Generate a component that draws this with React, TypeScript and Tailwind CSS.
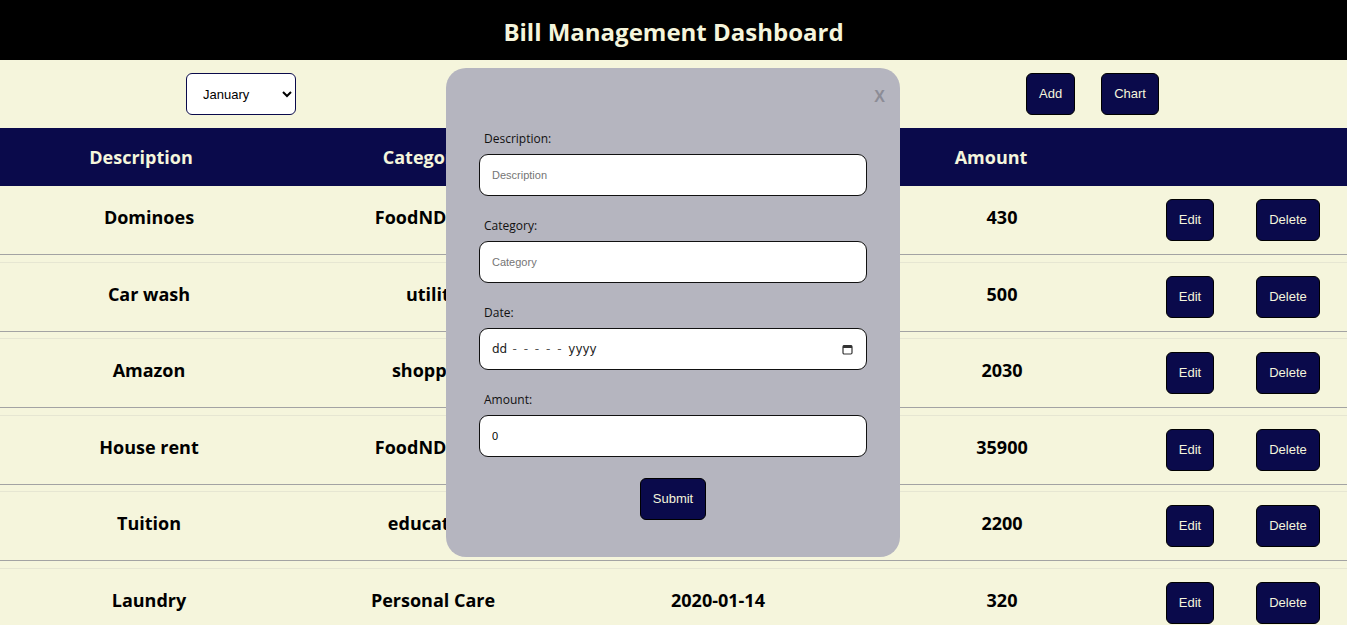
import React from 'react';

const bills = [
  { description: 'Dominoes', category: 'FoodNDining', date: '2020-01-02', amount: 430 },
  { description: 'Car wash', category: 'utility', date: '2020-01-04', amount: 500 },
  { description: 'Amazon', category: 'shopping', date: '2020-01-06', amount: 2030 },
  { description: 'House rent', category: 'FoodNDining', date: '2020-01-08', amount: 35900 },
  { description: 'Tuition', category: 'education', date: '2020-01-10', amount: 2200 },
  { description: 'Laundry', category: 'Personal Care', date: '2020-01-14', amount: 320 },
];

const btn =
  "h-[42px] px-3 rounded-[6px] border border-black bg-[#0a0a4b] text-[#f5f5dc] text-[13px] font-normal font-['Liberation_Sans',Arial,sans-serif]";

function Field({ label, children }: { label: string; children: React.ReactNode }) {
  return (
    <div className="mb-[22px]">
      <label className="block ml-[5px] mb-[7px] text-[12px] leading-[16px] text-[#111]">{label}</label>
      {children}
    </div>
  );
}

const inputCls =
  "w-full h-[42px] rounded-[9px] border border-[#111] bg-white px-3 text-[11px] text-black placeholder:text-[#757575] outline-none font-['Liberation_Sans',Arial,sans-serif]";

export default function App() {
  return (
    <div className="relative min-h-screen bg-[#f5f5dc] font-['Open_Sans',sans-serif]">
      {/* Header */}
      <header className="h-[60px] bg-black flex items-center justify-center pt-[3px]">
        <h1 className="text-[24px] font-bold text-[#f5f5dc]">Bill Management Dashboard</h1>
      </header>

      {/* Toolbar */}
      <div className="h-[68px] flex items-center pl-[186px]">
        <select className="w-[110px] h-[42px] rounded-[6px] border border-[#0a0a4b] bg-white pl-[12px] text-[13px] font-['Liberation_Sans',Arial,sans-serif]">
          <option>January</option>
          <option>February</option>
          <option>March</option>
        </select>
        <button className={`${btn} ml-[730px] h-[41px]`}>Add</button>
        <button className={`${btn} ml-[26px] h-[41px]`}>Chart</button>
      </div>

      {/* Table header */}
      <div className="h-[58px] bg-[#0a0a4b] grid grid-cols-[282px_282px_290px_274px_1fr] items-center text-center text-[18px] font-bold text-[#f5f5dc]">
        <div>Description</div>
        <div>Category</div>
        <div>Date</div>
        <div>Amount</div>
        <div />
      </div>

      {/* Rows */}
      {bills.map((b, i) => (
        <div key={i} className={i > 0 ? 'border-t border-[#e6e6d2] mt-[6.5px]' : ''}>
          <div className="h-[69px] border-b border-[#a3a3a3] grid grid-cols-[298px_270px_300px_268px_108px_88px] items-center text-center text-[18px] font-bold text-black">
            <div className="pb-[5px]">{b.description}</div>
            <div className="pb-[5px]">{b.category}</div>
            <div className="pb-[5px]">{b.date}</div>
            <div className="pb-[5px]">{b.amount}</div>
            <div className="flex justify-center">
              <button className={btn}>Edit</button>
            </div>
            <div className="flex justify-center">
              <button className={btn}>Delete</button>
            </div>
          </div>
        </div>
      ))}

      {/* Modal */}
      <div className="absolute left-[446px] top-[68px] w-[454px] h-[489px] rounded-[20px] bg-[#b5b5bf] px-[33px] pt-[63px]">
        <span className="absolute right-[15px] top-[19px] text-[16px] leading-[20px] font-bold text-[#8c8c96] font-['Liberation_Sans',Arial,sans-serif]">
          X
        </span>
        <Field label="Description:">
          <input className={inputCls} placeholder="Description" />
        </Field>
        <Field label="Category:">
          <input className={inputCls} placeholder="Category" />
        </Field>
        <Field label="Date:">
          <div className="w-full h-[42px] rounded-[9px] border border-[#111] bg-white pl-3 pr-[13px] flex items-center justify-between">
            <span className="text-[12px] text-[#222] font-['DejaVu_Sans',sans-serif]">
              dd<span className="text-[#555] tracking-[1.5px]"> - - - - - </span>yyyy
            </span>
            <svg width="11" height="11" viewBox="0 0 11 11">
              <rect x="1" y="1.5" width="9" height="8.5" rx="1.2" fill="none" stroke="#333" strokeWidth="1.2" />
              <rect x="1" y="1.5" width="9" height="2.5" fill="#333" />
            </svg>
          </div>
        </Field>
        <Field label="Amount:">
          <input className={inputCls} defaultValue="0" />
        </Field>
        <div className="flex justify-center -mt-[1px]">
          <button className={btn}>Submit</button>
        </div>
      </div>
    </div>
  );
}
